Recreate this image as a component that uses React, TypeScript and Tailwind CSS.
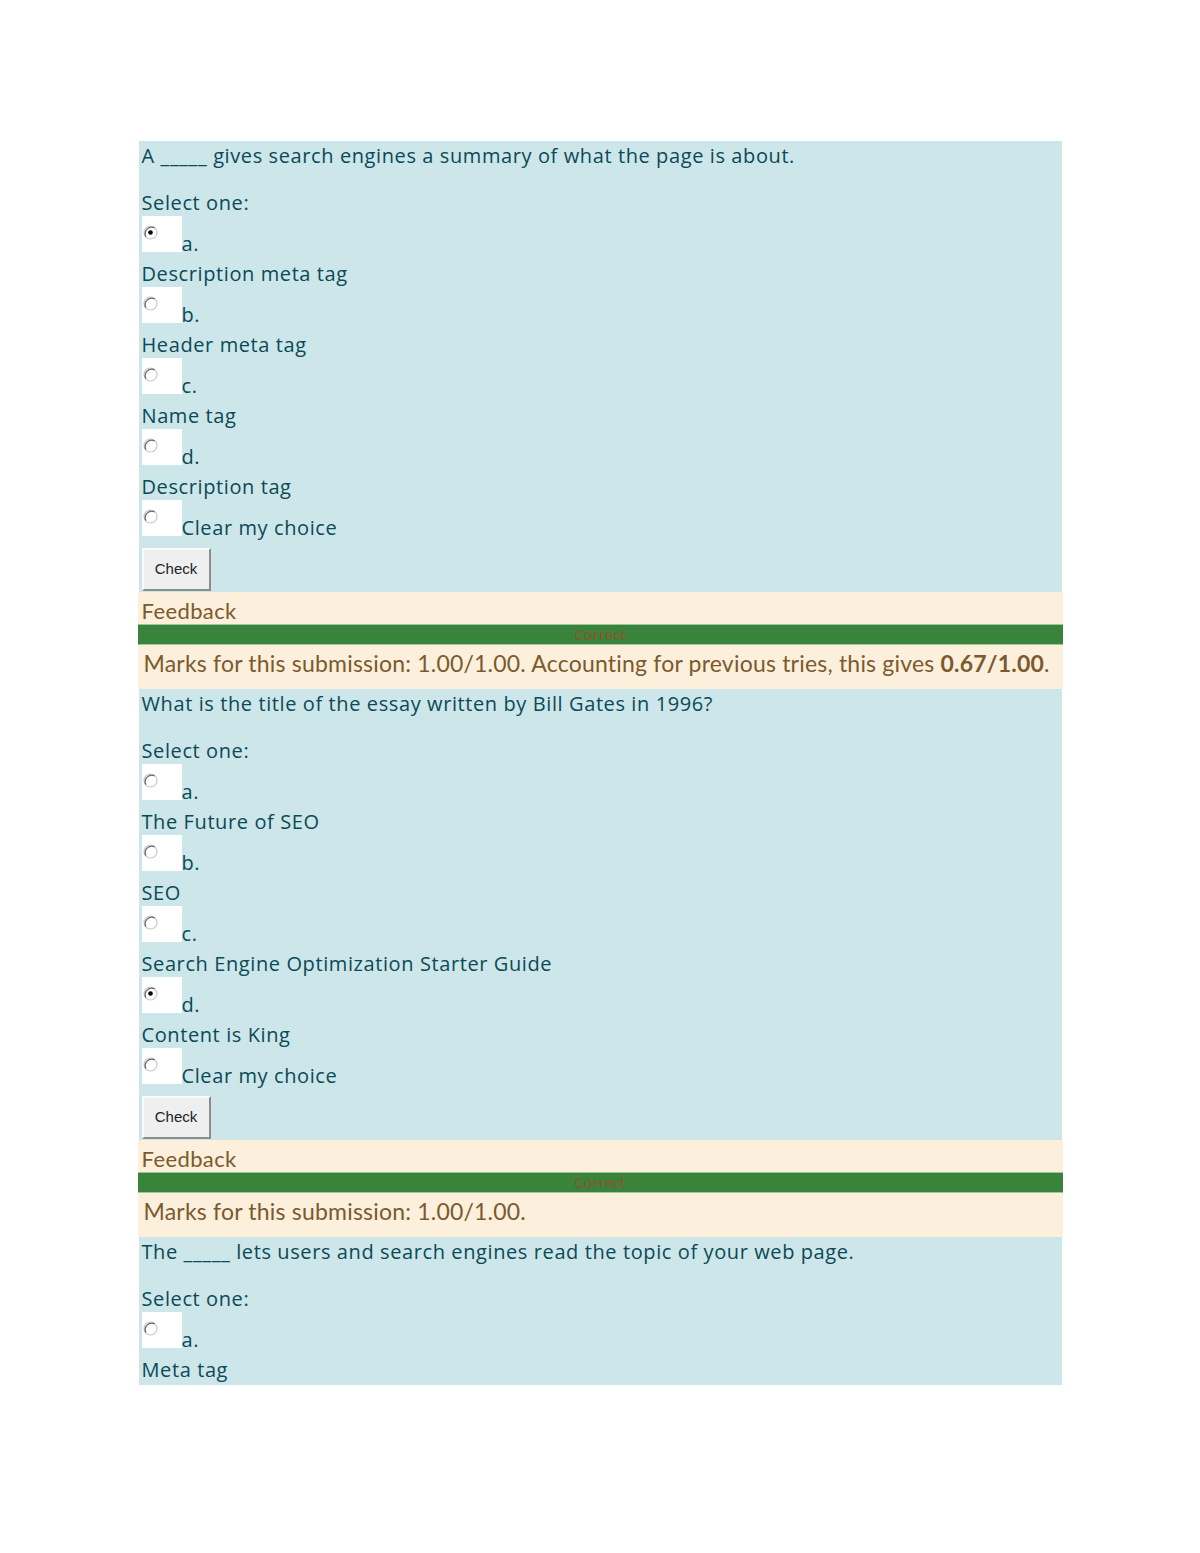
const Radio = ({ checked }: { checked?: boolean }) => (
  <svg width="15" height="15" viewBox="0 0 15 15">
    <circle cx="7.5" cy="7.5" r="6.5" fill="#fff" stroke="#c9c9c9" strokeWidth="1.2" />
    <path d="M2.9 11.6 A6.5 6.5 0 0 1 11.6 2.9" fill="none" stroke="#6b6b6b" strokeWidth="1.3" />
    {checked && <circle cx="7.5" cy="7.5" r="2.3" fill="#000" />}
  </svg>
)

const Option = ({ letter, label, checked }: { letter?: string; label?: string; checked?: boolean }) => (
  <div>
    <div className="flex items-end h-9">
      <div className="w-10 h-9 bg-white pl-px pt-[9px] shrink-0">
        <Radio checked={checked} />
      </div>
      <span className="leading-[16px]">{letter ?? "Clear my choice"}</span>
    </div>
    {label && <div className="h-[35px] pt-[10px] leading-6">{label}</div>}
  </div>
)

const Question = ({ text, options, answer, last }: { text: string; options: string[]; answer?: number; last?: boolean }) => {
  const letters = ["a.", "b.", "c.", "d."]
  return (
    <div className="bg-[#cde6ea] text-[#0b4a56] pl-[3px] text-[20px] tracking-[0.6px] font-['Open_Sans','Noto_Sans',sans-serif]">
      <p className="pt-[3px] leading-6">{text}</p>
      <p className="mt-[23px] mb-px leading-6">Select one:</p>
      {options.map((opt, i) => (
        <Option key={i} letter={letters[i]} label={opt} checked={answer === i} />
      ))}
      {!last && (
        <>
          <Option />
          <div className="pt-3 pb-px">
            <button className="w-[69px] h-[43px] bg-[#efefef] border-2 border-t-[#fafafa] border-l-[#fafafa] border-r-[#8c8c8c] border-b-[#8c8c8c] text-[15px] tracking-normal text-[#222] font-['Liberation_Sans',Arial,sans-serif]">
              Check
            </button>
          </div>
        </>
      )}
      {last && <div className="h-[2px]" />}
    </div>
  )
}

const Feedback = ({ children }: { children: React.ReactNode }) => (
  <div className="-mx-px font-['Lato','Noto_Sans',sans-serif]">
    <div className="bg-[#fcefdc] h-[32px] pt-[5px] pl-[4px] text-[22px] tracking-[0.4px] leading-[27px] text-[#7b5a2d]">Feedback</div>
    <div className="bg-[#3a833a] h-[21px] border-y border-[#9bc59b] text-center text-[15px] leading-[19px] text-[#8a5430] font-['Noto_Sans',sans-serif]">
      Correct
    </div>
    <div className="bg-[#fcefdc] h-[44px] pt-[4px] pl-[6px] text-[23px] tracking-[0.2px] leading-[28px] text-[#7b5a2d]">{children}</div>
  </div>
)

export default function App() {
  return (
    <div className="bg-white min-h-[1553px] pt-[141px]">
      <div className="w-[923px] mx-auto">
        <Question
          text="A _____ gives search engines a summary of what the page is about."
          options={["Description meta tag", "Header meta tag", "Name tag", "Description tag"]}
          answer={0}
        />
        <Feedback>
          Marks for this submission: 1.00/1.00. Accounting for previous tries, this gives <b>0.67/1.00</b>.
        </Feedback>
        <Question
          text="What is the title of the essay written by Bill Gates in 1996?"
          options={["The Future of SEO", "SEO", "Search Engine Optimization Starter Guide", "Content is King"]}
          answer={3}
        />
        <Feedback>Marks for this submission: 1.00/1.00.</Feedback>
        <Question
          text="The _____ lets users and search engines read the topic of your web page."
          options={["Meta tag"]}
          last
        />
      </div>
    </div>
  )
}
